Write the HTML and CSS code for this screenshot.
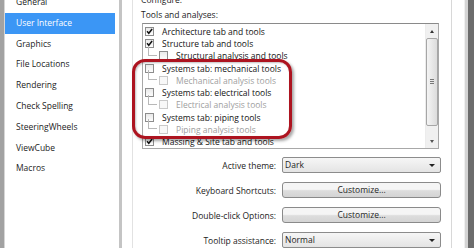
FILE: index.html
```html
<!DOCTYPE html>
<html>
<head>
<meta charset="utf-8">
<title>Options - User Interface</title>
<link rel="stylesheet" href="styles.css">
</head>
<body>
<div class="window">
  <div class="edge-left"></div>

  <ul class="sidebar">
    <li>General</li>
    <li class="selected">User Interface</li>
    <li>Graphics</li>
    <li>File Locations</li>
    <li>Rendering</li>
    <li>Check Spelling</li>
    <li>SteeringWheels</li>
    <li>ViewCube</li>
    <li>Macros</li>
  </ul>

  <div class="panel">
    <div class="group">
      <div class="caption">Configure:</div>
      <div class="caption">Tools and analyses:</div>

      <div class="listbox">
        <div class="rows">
          <div class="row"><span class="check on"><svg viewBox="0 0 8 8"><path d="M1.2 3.8 L3.2 6 L7 1.2"/></svg></span>Architecture tab and tools</div>
          <div class="row"><span class="check on"><svg viewBox="0 0 8 8"><path d="M1.2 3.8 L3.2 6 L7 1.2"/></svg></span>Structure tab and tools</div>
          <div class="row child"><span class="check"></span>Structural analysis and tools</div>
          <div class="row"><span class="check"></span>Systems tab: mechanical tools</div>
          <div class="row child off"><span class="check"></span>Mechanical analysis tools</div>
          <div class="row"><span class="check"></span>Systems tab: electrical tools</div>
          <div class="row child off"><span class="check"></span>Electrical analysis tools</div>
          <div class="row"><span class="check"></span>Systems tab: piping tools</div>
          <div class="row child off"><span class="check"></span>Piping analysis tools</div>
          <div class="row"><span class="check on"><svg viewBox="0 0 8 8"><path d="M1.2 3.8 L3.2 6 L7 1.2"/></svg></span>Massing &amp; Site tab and tools</div>
        </div>
        <div class="scrollbar">
          <div class="arrow up"></div>
          <div class="thumb"><span class="grip"></span></div>
          <div class="arrow down"></div>
        </div>
      </div>

      <div class="highlight"></div>

      <div class="form">
        <label>Active theme:</label>
        <div class="select">Dark<span class="caret"></span></div>
        <label>Keyboard Shortcuts:</label>
        <div class="button">Customize...</div>
        <label>Double-click Options:</label>
        <div class="button">Customize...</div>
        <label>Tooltip assistance:</label>
        <div class="select">Normal<span class="caret"></span></div>
      </div>
    </div>
  </div>

  <div class="edge-right"></div>
</div>
</body>
</html>
```

FILE: styles.css
```css
body {
  margin: 0;
  width: 474px;
  height: 248px;
  overflow: hidden;
  background: #fff;
  font-family: "Open Sans", "Noto Sans", sans-serif;
  font-size: 8.5px;
  color: #1c1c1c;
}

.window {
  display: flex;
  height: 248px;
}

.edge-left {
  width: 4px;
  background: #a2a2a2;
  border-right: 1px solid #d6d6d6;
}

/* left category list */
.sidebar {
  list-style: none;
  margin: -8px 0 0 0;
  padding: 0 4px 0 0;
  width: 111px;
  border-right: 3px solid #c4c4c4;
}

.sidebar li {
  height: 20.8px;
  line-height: 20.8px;
  padding-left: 11px;
  font-size: 8.5px;
  color: #1c1c1c;
}

.sidebar li.selected {
  background: #3b96f5;
  color: #fff;
}

.panel {
  flex: 1;
  padding-left: 10px;
  padding-right: 12px;
  margin-top: -6px;
}

.group {
  position: relative;
  height: 260px;
  border-left: 1px solid #e2e2e2;
  border-right: 1px solid #d8d8d8;
  padding: 0 10px 0 8px;
}

.caption {
  height: 12px;
  line-height: 12px;
  color: #1c1c1c;
}

.caption + .caption {
  margin-top: 3px;
}

/* tools list */
.listbox {
  display: flex;
  height: 123px;
  margin: 2px 2px 0 1px;
  border: 1px solid #a8a8a8;
  border-top-color: #8a8a8a;
  padding: 1px 0 0 0;
}

.rows {
  flex: 1;
}

.row {
  position: relative;
  display: flex;
  align-items: center;
  height: 12.3px;
  padding-left: 2px;
  white-space: nowrap;
  color: #141414;
}

.row.child {
  padding-left: 16px;
}

.row.child::before {
  content: "";
  position: absolute;
  left: 5px;
  top: -4px;
  width: 8px;
  height: 9px;
  border-left: 1px solid #b8b8b8;
  border-bottom: 1px solid #b8b8b8;
}

.row.off {
  color: #a0a0a0;
}

.check {
  flex: none;
  width: 7px;
  height: 7px;
  margin-right: 8px;
  border: 1px solid #8d8d8d;
  background: linear-gradient(#e9e9e9, #fdfdfd);
}

.row.off .check {
  border-color: #c9c9c9;
  background: #f8f8f8;
}

.check svg {
  display: block;
  width: 7px;
  height: 7px;
}

.check path {
  fill: none;
  stroke: #111;
  stroke-width: 1.7;
}

.scrollbar {
  display: flex;
  flex-direction: column;
  width: 12px;
  background: #f0f0f0;
  border-left: 1px solid #ececec;
  margin-top: -1px;
}

.arrow {
  position: relative;
  height: 13px;
}

.arrow::after {
  content: "";
  position: absolute;
  left: 4px;
  border-left: 2.5px solid transparent;
  border-right: 2.5px solid transparent;
}

.arrow.up::after {
  top: 6px;
  border-bottom: 3px solid #333;
}

.arrow.down::after {
  top: 5px;
  border-top: 3px solid #555;
}

.thumb {
  position: relative;
  height: 86px;
  margin: 1px 0 0 0;
  border: 1px solid #a6a6a6;
  border-radius: 2px;
  background: linear-gradient(90deg, #f4f4f4, #dcdcdc);
}

.grip {
  position: absolute;
  left: 3px;
  top: 40px;
  width: 4px;
  height: 5px;
  background: repeating-linear-gradient(#777 0 1px, transparent 1px 2px);
}

.arrow.down {
  margin-top: auto;
}

/* red call-out around the systems rows */
.highlight {
  position: absolute;
  left: -1px;
  top: 65px;
  width: 154px;
  height: 74px;
  border: 3.5px solid #ad1420;
  border-radius: 13px;
  box-shadow: 2px 2px 3px rgba(0, 0, 0, 0.35), inset 1px 1px 2px rgba(0, 0, 0, 0.25);
}

/* bottom settings */
.form {
  display: grid;
  grid-template-columns: 135px 159px;
  column-gap: 6px;
  row-gap: 9px;
  grid-auto-rows: 16px;
  margin-top: 8px;
  align-items: center;
}

.form label {
  text-align: right;
  color: #1c1c1c;
}

.select {
  position: relative;
  height: 14px;
  line-height: 14px;
  padding-left: 2px;
  border: 1px solid #8c8c8c;
  border-radius: 2px;
  background: linear-gradient(#f6f6f6, #e4e4e4);
  color: #1e1e1e;
}

.caret {
  position: absolute;
  right: 5px;
  top: 6px;
  border-left: 3px solid transparent;
  border-right: 3px solid transparent;
  border-top: 3px solid #222;
}

.button {
  height: 14px;
  line-height: 14px;
  text-align: center;
  border: 1px solid #8a8a8a;
  border-radius: 3px;
  background: linear-gradient(#f5f5f5 45%, #dddddd 55%, #d4d4d4);
  color: #262626;
}

.edge-right {
  width: 9px;
  background: linear-gradient(90deg, #d4d4d4 0 3px, #6c6c6c 3px);
  border-left: 1px solid #f0f0f0;
}
```
